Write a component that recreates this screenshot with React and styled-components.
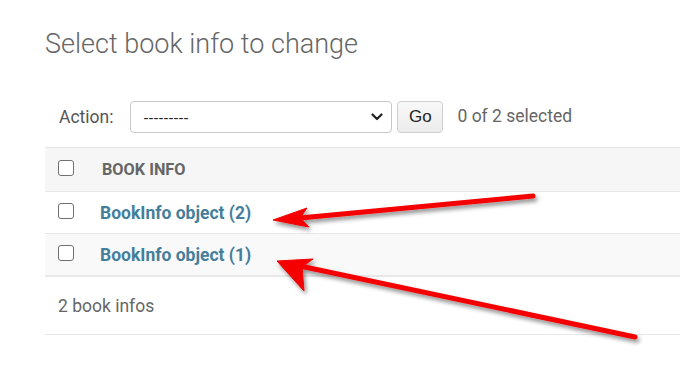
import React from 'react';
import styled, { createGlobalStyle } from 'styled-components';

const GlobalStyle = createGlobalStyle`
  html, body {
    margin: 0;
    padding: 0;
    background: #fff;
    overflow: hidden;
  }
  body {
    font-family: Roboto, "Liberation Sans", sans-serif;
    color: #333;
  }
`;

const Page = styled.div`
  position: relative;
  width: 680px;
  height: 387px;
  overflow: hidden;
`;

const Content = styled.div`
  padding: 28px 0 0 45px;
`;

const Title = styled.h1`
  margin: 0 0 30px 0;
  font-size: 27px;
  font-weight: 300;
  color: #666;
  line-height: 32px;
`;

const ActionsBar = styled.div`
  display: flex;
  align-items: center;
  padding: 11px 0 14px 14px;
  border-bottom: 1px solid #e8e8e8;
`;

const Label = styled.span`
  font-size: 17.5px;
  color: #555;
  margin-right: 17px;
`;

const Select = styled.div`
  box-sizing: border-box;
  width: 262px;
  height: 32px;
  border: 1px solid #c8c8c8;
  border-radius: 4px;
  display: flex;
  align-items: center;
  justify-content: space-between;
  padding: 0 8px 0 12px;
  font-family: "Liberation Sans", Arial, sans-serif;
  font-size: 15px;
  color: #222;
`;

const GoButton = styled.button`
  box-sizing: border-box;
  margin-left: 5px;
  width: 46px;
  height: 32px;
  border: 1px solid #cfcfcf;
  border-radius: 4px;
  background: linear-gradient(#f8f8f8, #ececec);
  font-family: "Liberation Sans", Arial, sans-serif;
  font-size: 17px;
  color: #222;
  padding: 0;
`;

const Counter = styled.span`
  margin-left: 14px;
  font-size: 17.5px;
  color: #666;
  margin-top: -2px;
`;

const Row = styled.div`
  display: flex;
  align-items: center;
  height: ${p => p.h || 41}px;
  background: ${p => p.bg || '#fff'};
  border-bottom: ${p => p.bw || 1}px solid #e8e8e8;
  padding-left: 13px;
`;

const Box = styled.span`
  box-sizing: border-box;
  flex: none;
  width: 16px;
  height: 16px;
  border: 1.5px solid #707070;
  border-radius: 3px;
  background: #fff;
  margin-top: ${p => p.mt || 0}px;
`;

const HeadCell = styled.span`
  margin-left: 28px;
  font-size: 16.25px;
  font-weight: 700;
  color: #666;
  text-transform: uppercase;
`;

const ObjLink = styled.a`
  margin-left: 26px;
  font-size: 17.5px;
  font-weight: 700;
  color: #447e9b;
  text-decoration: none;
`;

const Footer = styled.div`
  height: 57px;
  display: flex;
  align-items: center;
  padding-left: 13px;
  font-size: 17.5px;
  color: #666;
  border-bottom: 1px solid #e8e8e8;
`;

const Arrows = styled.svg`
  position: absolute;
  left: 0;
  top: 0;
  pointer-events: none;
`;

const Chevron = () => (
  <svg width="12" height="8" viewBox="0 0 12 8">
    <path d="M1.5 1.5 L6 6 L10.5 1.5" fill="none" stroke="#222" strokeWidth="2.2" strokeLinecap="round" strokeLinejoin="round" />
  </svg>
);

const rows = [
  { id: 2, bg: '#fff', bw: 1 },
  { id: 1, bg: '#f9f9f9', bw: 2 },
];

export default function App() {
  return (
    <Page>
      <GlobalStyle />
      <Content>
        <Title>Select book info to change</Title>
        <ActionsBar>
          <Label>Action:</Label>
          <Select>
            <span>---------</span>
            <Chevron />
          </Select>
          <GoButton>Go</GoButton>
          <Counter>0 of 2 selected</Counter>
        </ActionsBar>
        <Row h={43} bg="#f6f6f6">
          <Box mt={-4} />
          <HeadCell>Book info</HeadCell>
        </Row>
        {rows.map(r => (
          <Row key={r.id} h={41} bg={r.bg} bw={r.bw}>
            <Box mt={-4} />
            <ObjLink href="#">BookInfo object ({r.id})</ObjLink>
          </Row>
        ))}
        <Footer>2 book infos</Footer>
      </Content>
      <Arrows width="680" height="387" viewBox="0 0 680 387">
        <defs>
          <filter id="sh" x="-20%" y="-20%" width="140%" height="140%">
            <feDropShadow dx="2" dy="3" stdDeviation="2" floodColor="#000" floodOpacity="0.45" />
          </filter>
        </defs>
        <g filter="url(#sh)" fill="#f40000" stroke="#f40000">
          <line x1="533" y1="196" x2="300" y2="218" strokeWidth="5" strokeLinecap="round" />
          <polygon points="273,220 307,208 300,218 309,227" strokeWidth="1" strokeLinejoin="round" />
          <line x1="635" y1="337" x2="300" y2="266" strokeWidth="5" strokeLinecap="round" />
          <polygon points="277,261 313,259 302,267 304,291" strokeWidth="1" strokeLinejoin="round" />
        </g>
      </Arrows>
    </Page>
  );
}
